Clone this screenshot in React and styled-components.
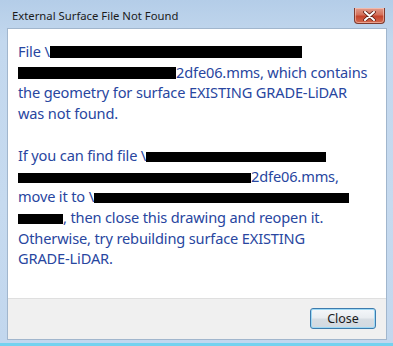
import React from "react";
import styled, { createGlobalStyle } from "styled-components";

const GlobalStyle = createGlobalStyle`
  html, body {
    margin: 0;
    padding: 0;
    background: #ffffff;
  }
`;

const Window = styled.div`
  width: 393px;
  height: 346px;
  box-sizing: border-box;
  display: flex;
  flex-direction: column;
  background: linear-gradient(180deg, #b4cde8 0%, #c3d8ee 12%, #c6daef 60%, #c2d7ee 100%);
  border-bottom: 3px solid #74d2ef;
  font-family: "Open Sans", "Noto Sans", sans-serif;
`;

const TitleBar = styled.div`
  height: 28px;
  display: flex;
  align-items: flex-start;
  justify-content: space-between;
  padding: 0 8px 0 12px;
`;

const Title = styled.span`
  font-family: "Noto Sans", "Open Sans", sans-serif;
  font-size: 11.3px;
  color: #1b1b1b;
  line-height: 31px;
`;

const CaptionClose = styled.button`
  margin-top: 8px;
  width: 31px;
  height: 16px;
  padding: 0;
  border: 1px solid #7d3a2e;
  border-top: none;
  border-radius: 0 0 4px 4px;
  background: linear-gradient(180deg, #e19b8b 0%, #d4705a 45%, #c4432b 55%, #d36a4f 100%);
  box-shadow: inset 0 0 0 1px rgba(255, 220, 210, 0.5);
  display: flex;
  align-items: center;
  justify-content: center;
`;

const Client = styled.div`
  flex: 1;
  margin: 0 6px 3px 7px;
  display: flex;
  flex-direction: column;
  border: 1px solid #a1b6cd;
`;

const Content = styled.div`
  flex: 1;
  background: #ffffff;
  padding: 12px 10px 0 10px;
`;

const Message = styled.p`
  margin: 0 0 21px 0;
  font-family: "Noto Sans", "Open Sans", sans-serif;
  font-size: 14.6px;
  line-height: 20.7px;
  color: #2846a0;
  letter-spacing: -0.15px;
  white-space: nowrap;
`;

const Redact = styled.span`
  display: inline-block;
  width: ${props => props.w}px;
  height: ${props => props.h || 12}px;
  background: #000000;
  vertical-align: ${props => props.v || -1}px;
`;

const Footer = styled.div`
  height: 40px;
  background: #f0f0f0;
  border-top: 1px solid #dfdfdf;
  display: flex;
  align-items: center;
  justify-content: flex-end;
  padding-right: 10px;
`;

const Button = styled.button`
  width: 66px;
  height: 21px;
  margin-top: -1px;
  border: 1px solid #3d7bad;
  border-radius: 3px;
  background: linear-gradient(180deg, #f4f7fa 0%, #e9edf1 45%, #d7dde3 55%, #d2d9e0 100%);
  box-shadow: inset 0 0 0 1px #9ed9f5;
  font-family: "Noto Sans", "Open Sans", sans-serif;
  font-size: 12.5px;
  color: #1a1a1a;
  padding: 0;
`;

const CloseGlyph = () => (
  <svg width="13" height="10" viewBox="0 0 13 10">
    <path d="M2 1 L11 9 M11 1 L2 9" stroke="#5a1e14" strokeWidth="3.6" strokeLinecap="round" />
    <path d="M2 1 L11 9 M11 1 L2 9" stroke="#ffffff" strokeWidth="2" strokeLinecap="round" />
  </svg>
);

export default function App() {
  return (
    <>
      <GlobalStyle />
      <Window>
        <TitleBar>
          <Title>External Surface File Not Found</Title>
          <CaptionClose aria-label="Close">
            <CloseGlyph />
          </CaptionClose>
        </TitleBar>
        <Client>
          <Content>
            <Message>
              File \<Redact w={252} />
              <br />
              <Redact w={158} />2dfe06.mms, which contains
              <br />
              the geometry for surface EXISTING GRADE-LiDAR
              <br />
              was not found.
            </Message>
            <Message>
              If you can find file \<Redact w={180} h={10} />
              <br />
              <Redact w={233} h={10} />2dfe06.mms,
              <br />
              move it to \<Redact w={255} h={10} />
              <br />
              <Redact w={45} h={10} />, then close this drawing and reopen it.
              <br />
              Otherwise, try rebuilding surface EXISTING
              <br />
              GRADE-LiDAR.
            </Message>
          </Content>
          <Footer>
            <Button>Close</Button>
          </Footer>
        </Client>
      </Window>
    </>
  );
}
